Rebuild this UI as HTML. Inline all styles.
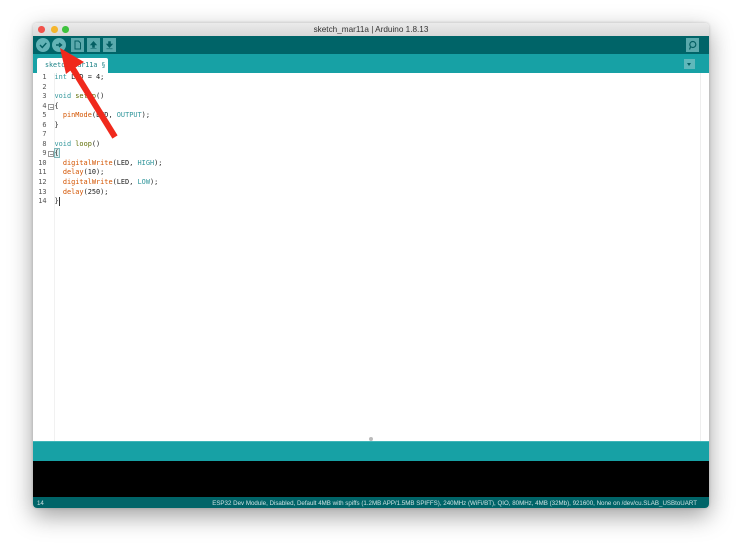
<!DOCTYPE html>
<html><head><meta charset="utf-8"><style>
html,body{margin:0;padding:0;width:742px;height:552px;overflow:hidden;background:#fff}
body{position:relative;font-family:"Liberation Sans",sans-serif}
#a{position:absolute;inset:0;filter:blur(.35px)}
.w{position:absolute;left:33px;top:23px;width:676px;height:485px;border-radius:4px;box-shadow:0 8px 24px rgba(0,0,0,.38),0 0 3px rgba(0,0,0,.2);overflow:hidden;background:#fff}
.b{position:absolute;left:0;width:676px}
.t{top:0;height:13px;background:linear-gradient(#ebebeb,#d8d8d8);text-align:center;font-size:8.2px;line-height:13px;color:#333}
.d{position:absolute;top:3px;width:6.5px;height:6.5px;border-radius:50%}
.ic{position:absolute;top:2px;width:13px;height:14px;background:#5aa9ac}
.c{position:absolute;top:2px;width:14px;height:14px;border-radius:50%;background:#63b3b6}
.m{position:absolute;font:6.9px/9.54px "DejaVu Sans Mono",monospace;white-space:pre;color:#222}
.k{color:#33979c}.g{color:#5e6d03}.o{color:#d35400}
.n{position:absolute;left:0;width:13.500px;text-align:right;font:6.9px/9.54px "DejaVu Sans Mono",monospace;color:#555;white-space:pre}
.f{position:absolute;left:15px;width:4px;height:4px;border:.7px solid #999;box-sizing:content-box}
.f:after{content:"";position:absolute;left:.5px;right:.5px;top:1.600px;height:.7px;background:#999}
</style></head><body><div id="a">
<div class="w">
 <div class="b t">sketch_mar11a | Arduino 1.8.13
  <div class="d" style="left:5px;background:#f2524b"></div><div class="d" style="left:18px;background:#f5b62e"></div><div class="d" style="left:29px;background:#3fc33f"></div></div>
 <div class="b" style="top:13px;height:18px;background:#006468">
  <div class="c" style="left:3px"></div>
  <svg style="position:absolute;left:3px;top:2px" width="14" height="14"><path d="M4 7l2.300 2.500L10.300 5" fill="none" stroke="#045f63" stroke-width="1.400"/></svg>
  <div class="c" style="left:19px"></div>
  <svg style="position:absolute;left:19px;top:2px" width="14" height="14"><path d="M4 7h5M7 5l2.500 2L7 9" fill="none" stroke="#045f63" stroke-width="1.400"/></svg>
  <div class="ic" style="left:38px"></div>
  <svg style="position:absolute;left:38px;top:2px" width="13" height="14"><path d="M4 3h3.500L9.500 5v6H4z" fill="none" stroke="#045f63" stroke-width="1"/></svg>
  <div class="ic" style="left:54px"></div>
  <svg style="position:absolute;left:54px;top:2px" width="13" height="14"><path d="M6.500 3.500L9.500 7H7.500v2.500h-2V7H3.500zM3.500 10.500h6" fill="#045f63" stroke="#045f63" stroke-width=".6"/></svg>
  <div class="ic" style="left:70px"></div>
  <svg style="position:absolute;left:70px;top:2px" width="13" height="14"><path d="M6.500 9.500L9.500 6H7.500V3.500h-2V6H3.500zM3.500 10.800h6" fill="#045f63" stroke="#045f63" stroke-width=".6"/></svg>
  <div class="ic" style="left:653px;background:#5aa9ac"></div>
  <svg style="position:absolute;left:653px;top:2px" width="13" height="14"><circle cx="6.800" cy="6.500" r="3" fill="none" stroke="#045f63" stroke-width="1.200"/><path d="M4.500 9l-1 2.500" stroke="#045f63" stroke-width="1.200"/></svg>
 </div>
 <div class="b" style="top:31px;height:19px;background:#17a1a5">
  <div style="position:absolute;left:4px;top:4px;width:71px;height:15px;background:#fff;border-radius:2px 2px 0 0;font:6.700px/15px 'DejaVu Sans Mono',monospace;color:#1b8286;padding-left:8px;box-sizing:border-box;white-space:pre">sketch_mar11a §</div>
  <div style="position:absolute;left:651px;top:5px;width:11px;height:10px;background:#5fb8bb"></div>
  <div style="position:absolute;left:654px;top:9px;border:2.500px solid transparent;border-top:3px solid #045f63;border-bottom:0"></div>
 </div>
 <div class="b" style="top:50px;height:368px;background:#fff">
  <div style="position:absolute;left:21px;top:0;width:1px;height:368px;background:#f1f1f1"></div>
  <div style="position:absolute;left:667px;top:0;width:1px;height:368px;background:#eee"></div>
  <div class="n" style="top:0">1
2
3
4
5
6
7
8
9
10
11
12
13
14</div>
  <div class="f" style="top:31px"></div>
  <div class="f" style="top:78px"></div>
  <div class="m" style="left:21.500px;top:0"><span class="k">int</span> LED = 4;

<span class="k">void</span> <span class="g">setup</span>()
{
  <span class="o">pinMode</span>(LED, <span class="k">OUTPUT</span>);
}

<span class="k">void</span> <span class="g">loop</span>()
<span style="background:#dff0f0;outline:1px solid #7fb7ba">{</span>
  <span class="o">digitalWrite</span>(LED, <span class="k">HIGH</span>);
  <span class="o">delay</span>(10);
  <span class="o">digitalWrite</span>(LED, <span class="k">LOW</span>);
  <span class="o">delay</span>(250);
}</div>
  <div style="position:absolute;left:26px;top:124px;width:1px;height:9px;background:#333"></div>
  <div style="position:absolute;left:336px;top:364px;width:4px;height:4px;border-radius:50%;background:#bbb"></div>
 </div>
 <div class="b" style="top:418px;height:20px;background:#17a1a5;border-top:1px solid #3fb5b8;box-sizing:border-box"></div>
 <div class="b" style="top:438px;height:36px;background:#000"></div>
 <div class="b" style="top:474px;height:11px;background:#006468;color:#cfe3e4;font-size:6.180px;line-height:13px">
  <span style="position:absolute;left:4px">14</span>
  <span style="position:absolute;right:12px;white-space:nowrap">ESP32 Dev Module, Disabled, Default 4MB with spiffs (1.2MB APP/1.5MB SPIFFS), 240MHz (WiFi/BT), QIO, 80MHz, 4MB (32Mb), 921600, None on /dev/cu.SLAB_USBtoUART</span>
 </div>
</div>
<svg style="position:absolute;left:0;top:0" width="742" height="552"><path d="M60 48L84 62L75.600 67.400L117.600 135.400L112.400 138.600L70.400 70.600L66 74Z" fill="#f0291c"/></svg>
</div></body></html>
